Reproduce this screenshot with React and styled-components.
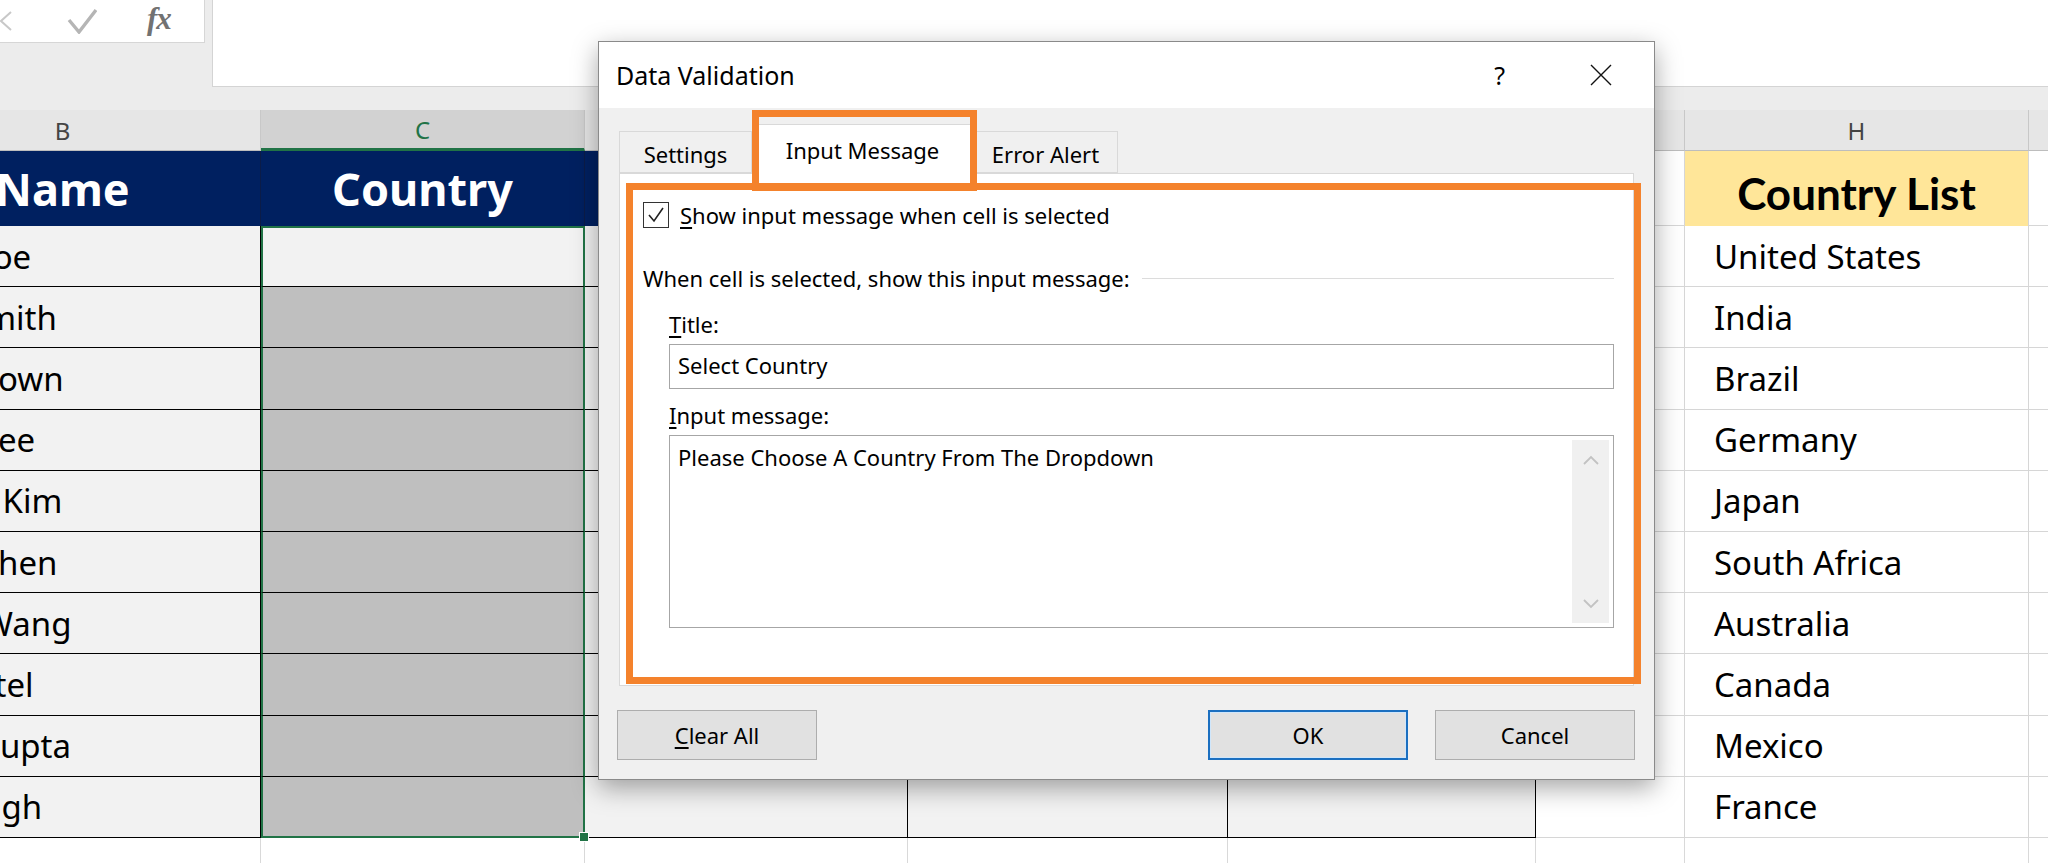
import React from 'react';
import styled, { createGlobalStyle, css } from 'styled-components';

const GlobalStyle = createGlobalStyle`
  html, body { margin: 0; padding: 0; background: #fff; }
  * { box-sizing: border-box; }
`;

const names = ['Grace Doe', 'Sarah Smith', 'Linda Brown', 'Jessica Lee', 'Thomas Kim', 'Daniel Chen', 'Steven Wang', 'Priya Patel', 'Manoj Gupta', 'Asha Singh'];
const countries = ['United States', 'India', 'Brazil', 'Germany', 'Japan', 'South Africa', 'Australia', 'Canada', 'Mexico', 'France'];
const letters = ['B', 'C', 'D', 'E', 'F', 'G', 'H', 'I'];

const App = () => {
  return (
    <>
      <GlobalStyle />
      <Screen>
        <FormulaBar>
          <FxBox>
            <svg width="12" height="22" viewBox="0 0 12 22">
              <polyline points="11,2 1,11 11,20" fill="none" stroke="#c8c8c8" strokeWidth="2" />
            </svg>
            <IconGap $w={55} />
            <svg width="30" height="26" viewBox="0 0 30 26">
              <polyline points="2,12 12,24 29,2" fill="none" stroke="#b5b5b5" strokeWidth="3.4" />
            </svg>
            <IconGap $w={50} />
            <FxText>fx</FxText>
          </FxBox>
          <FormulaInput />
        </FormulaBar>

        <Sheet>
          {letters.map((l) => (
            <ColHead key={l} $active={l === 'C'}>{l}</ColHead>
          ))}

          <TitleCell $tone="navy">Name</TitleCell>
          <TitleCell $tone="navy">Country</TitleCell>
          <TitleCell $tone="navy" />
          <TitleCell $tone="navy" />
          <TitleCell $tone="navy" />
          <TitleCell $tone="plain" />
          <TitleCell $tone="yellow">Country List</TitleCell>
          <TitleCell $tone="plain" />

          {names.map((n, i) => (
            <React.Fragment key={n}>
              <Cell $fill="#f2f2f2" $line="#000" $pad={5}>{n}</Cell>
              <SelCell $first={i === 0} $last={i === names.length - 1} $fill={i === 0 ? '#f2f2f2' : '#bfbfbf'} />
              <Cell $fill="#f2f2f2" $line="#000" />
              <Cell $fill="#f2f2f2" $line="#000" />
              <Cell $fill="#f2f2f2" $line="#000" />
              <Cell $fill="#fff" $line="#d6d6d6" />
              <Cell $fill="#fff" $line="#d6d6d6" $pad={29}>{countries[i]}</Cell>
              <Cell $fill="#fff" $line="#d6d6d6" />
            </React.Fragment>
          ))}

          {letters.map((l) => (
            <TailCell key={'t' + l} />
          ))}
        </Sheet>

        <Dialog>
          <TitleBar>
            <DialogTitle>Data Validation</DialogTitle>
            <Help>?</Help>
            <svg width="24" height="24" viewBox="0 0 24 24">
              <path d="M2 2 L22 22 M22 2 L2 22" stroke="#111" strokeWidth="1.4" fill="none" />
            </svg>
          </TitleBar>

          <Body>
            <TabStrip>
              <Tab $w={133}>Settings</Tab>
              <Tab $w={221} $active>Input Message</Tab>
              <Tab $w={145}>Error Alert</Tab>
            </TabStrip>

            <Panel>
              <CheckRow>
                <CheckBox>
                  <svg width="20" height="20" viewBox="0 0 20 20">
                    <polyline points="3,10 8,16 17,3" fill="none" stroke="#222" strokeWidth="1.6" />
                  </svg>
                </CheckBox>
                <Label><Key>S</Key>how input message when cell is selected</Label>
              </CheckRow>

              <GroupHead>
                <Label>When cell is selected, show this input message:</Label>
                <Rule />
              </GroupHead>

              <Fields>
                <FieldLabel $gap={18}><Key>T</Key>itle:</FieldLabel>
                <TextBox>Select Country</TextBox>
                <FieldLabel $gap={12}><Key>I</Key>nput message:</FieldLabel>
                <MessageBox>
                  <MessageText>Please Choose A Country From The Dropdown</MessageText>
                  <ScrollBar>
                    <svg width="16" height="10" viewBox="0 0 16 10">
                      <polyline points="1,9 8,2 15,9" fill="none" stroke="#c2c2c2" strokeWidth="1.8" />
                    </svg>
                    <svg width="16" height="10" viewBox="0 0 16 10">
                      <polyline points="1,1 8,8 15,1" fill="none" stroke="#c2c2c2" strokeWidth="1.8" />
                    </svg>
                  </ScrollBar>
                </MessageBox>
              </Fields>
            </Panel>

            <ButtonRow>
              <Button><Key>C</Key>lear All</Button>
              <ButtonGroup>
                <Button $primary>OK</Button>
                <Button>Cancel</Button>
              </ButtonGroup>
            </ButtonRow>

            <TabMark />
            <PanelMark />
          </Body>
        </Dialog>
      </Screen>
    </>
  );
};

export default App;

const Screen = styled.div`
  position: relative;
  width: 2048px;
  height: 863px;
  overflow: hidden;
  background: #ececec;
  font-family: "Noto Sans", "Open Sans", sans-serif;
  color: #000;
`;

const FormulaBar = styled.div`
  display: flex;
  align-items: flex-start;
  height: 87px;
`;

const FxBox = styled.div`
  display: flex;
  align-items: center;
  width: 205px;
  height: 43px;
  background: #fff;
  border-right: 1px solid #d6d6d6;
  border-bottom: 1px solid #d6d6d6;
`;

const IconGap = styled.span`
  width: ${(p) => p.$w}px;
`;

const FxText = styled.span`
  font-family: "Liberation Serif", "DejaVu Serif", serif;
  font-style: italic;
  font-weight: 700;
  font-size: 31px;
  letter-spacing: -1px;
  color: #727272;
  margin-top: -4px;
`;

const FormulaInput = styled.div`
  flex: 1;
  height: 87px;
  margin-left: 7px;
  background: #fff;
  border-left: 1px solid #d4d4d4;
  border-bottom: 1px solid #d4d4d4;
`;

const Sheet = styled.div`
  display: grid;
  grid-template-columns: 396px 324px 323px 320px 308px 149px 344px 300px;
  grid-template-rows: 41px 75px repeat(10, 61.2px) 40px;
  margin-top: 23px;
  margin-left: -135px;
`;

const ColHead = styled.div`
  display: flex;
  align-items: center;
  justify-content: center;
  font-size: 24px;
  background: ${(p) => (p.$active ? '#d2d2d2' : '#e6e6e6')};
  color: ${(p) => (p.$active ? '#217346' : '#444')};
  border-right: 1px solid #c8c8c8;
  border-bottom: ${(p) => (p.$active ? '3px solid #217346' : '1px solid #bdbdbd')};
`;

const tones = {
  navy: css`
    background: #002060;
    color: #fff;
    font-size: 45px;
    border-right: 1px solid #0b1c48;
  `,
  yellow: css`
    background: #ffe699;
    color: #000;
    font-family: Lato, "Noto Sans", sans-serif;
    font-size: 44px;
    padding-top: 8px;
    border-right: 1px solid #d6d6d6;
  `,
  plain: css`
    background: #fff;
    border-right: 1px solid #d6d6d6;
    border-bottom: 1px solid #d6d6d6;
  `,
};

const TitleCell = styled.div`
  display: flex;
  align-items: center;
  justify-content: center;
  font-weight: 700;
  white-space: nowrap;
  ${(p) => tones[p.$tone]}
`;

const Cell = styled.div`
  display: flex;
  align-items: center;
  padding-left: ${(p) => p.$pad || 0}px;
  font-size: 33px;
  white-space: nowrap;
  overflow: hidden;
  background: ${(p) => p.$fill};
  border-right: 1px solid ${(p) => p.$line};
  border-bottom: 1px solid ${(p) => p.$line};
`;

const SelCell = styled.div`
  position: relative;
  background: ${(p) => p.$fill};
  border-left: 2px solid #217346;
  border-right: 2px solid #217346;
  border-bottom: ${(p) => (p.$last ? '2px solid #217346' : '1px solid #000')};
  border-top: ${(p) => (p.$first ? '2px solid #217346' : 'none')};
  ${(p) =>
    p.$last &&
    css`
      &::after {
        content: '';
        position: absolute;
        right: -6px;
        bottom: -6px;
        width: 8px;
        height: 8px;
        background: #217346;
        border: 1px solid #fff;
      }
    `}
`;

const TailCell = styled.div`
  background: #fff;
  border-right: 1px solid #d9d9d9;
`;

/* dialog */

const Dialog = styled.div`
  position: absolute;
  left: 598px;
  top: 41px;
  width: 1057px;
  height: 739px;
  display: flex;
  flex-direction: column;
  background: #f0f0f0;
  border: 1px solid #8a8a8a;
  box-shadow: 0 8px 24px rgba(0, 0, 0, 0.35);
`;

const TitleBar = styled.div`
  display: flex;
  align-items: center;
  height: 66px;
  padding: 0 41px 0 17px;
  background: #fff;
`;

const DialogTitle = styled.div`
  flex: 1;
  font-size: 25px;
`;

const Help = styled.div`
  font-size: 25px;
  margin-right: 84px;
`;

const Body = styled.div`
  position: relative;
  flex: 1;
  display: flex;
  flex-direction: column;
  padding: 23px 19px 18px 20px;
  font-size: 22px;
`;

const TabStrip = styled.div`
  display: flex;
  align-items: flex-end;
  height: 42px;
  position: relative;
  z-index: 1;
`;

const Tab = styled.div`
  display: flex;
  align-items: center;
  justify-content: center;
  width: ${(p) => p.$w}px;
  height: ${(p) => (p.$active ? 50 : 42)}px;
  margin-bottom: ${(p) => (p.$active ? -1 : 0)}px;
  background: ${(p) => (p.$active ? '#fff' : '#f0f0f0')};
  border: 1px solid #d9d9d9;
  border-bottom: ${(p) => (p.$active ? 'none' : '1px solid #d9d9d9')};
  padding-top: ${(p) => (p.$active ? 0 : 3)}px;
`;

const Panel = styled.div`
  display: flex;
  flex-direction: column;
  width: 1015px;
  height: 513px;
  padding: 27px 19px 0 23px;
  background: #fff;
  border: 1px solid #d9d9d9;
`;

const CheckRow = styled.div`
  display: flex;
  align-items: center;
  gap: 11px;
  height: 28px;
`;

const CheckBox = styled.div`
  display: flex;
  align-items: center;
  justify-content: center;
  width: 26px;
  height: 26px;
  border: 1px solid #333;
  background: #fff;
`;

const Label = styled.span`
  line-height: 28px;
  white-space: nowrap;
`;

const Key = styled.span`
  text-decoration: underline;
  text-underline-offset: 3px;
`;

const GroupHead = styled.div`
  display: flex;
  align-items: center;
  gap: 12px;
  margin-top: 35px;
`;

const Rule = styled.div`
  flex: 1;
  height: 1px;
  background: #dcdcdc;
`;

const Fields = styled.div`
  display: flex;
  flex-direction: column;
  padding-left: 26px;
`;

const FieldLabel = styled.div`
  line-height: 28px;
  margin-top: ${(p) => p.$gap}px;
`;

const TextBox = styled.div`
  display: flex;
  align-items: center;
  height: 45px;
  margin-top: 6px;
  padding: 0 0 3px 8px;
  border: 1px solid #a6a6a6;
  background: #fff;
`;

const MessageBox = styled.div`
  display: flex;
  height: 193px;
  margin-top: 6px;
  border: 1px solid #a6a6a6;
  background: #fff;
`;

const MessageText = styled.div`
  flex: 1;
  padding: 7px 0 0 8px;
  line-height: 28px;
`;

const ScrollBar = styled.div`
  display: flex;
  flex-direction: column;
  align-items: center;
  justify-content: space-between;
  width: 37px;
  margin: 4px 4px 4px 0;
  padding: 15px 0 14px;
  background: #f0f0f0;
`;

const ButtonRow = styled.div`
  display: flex;
  justify-content: space-between;
  margin-top: 24px;
  margin-left: -2px;
`;

const ButtonGroup = styled.div`
  display: flex;
  gap: 27px;
`;

const Button = styled.div`
  display: flex;
  align-items: center;
  justify-content: center;
  width: 200px;
  height: 50px;
  background: #e1e1e1;
  border: ${(p) => (p.$primary ? '2px solid #1b6fc0' : '1px solid #adadad')};
  box-shadow: ${(p) => (p.$primary ? 'inset 0 0 0 1px #cfe6fb' : 'none')};
`;

/* orange annotation boxes drawn over the dialog */

const TabMark = styled.div`
  position: absolute;
  left: 153px;
  top: 2px;
  width: 225px;
  height: 81px;
  border: 7px solid #f4822c;
  z-index: 2;
`;

const PanelMark = styled.div`
  position: absolute;
  left: 27px;
  top: 75px;
  width: 1015px;
  height: 501px;
  border: 7px solid #f4822c;
  z-index: 2;
`;
